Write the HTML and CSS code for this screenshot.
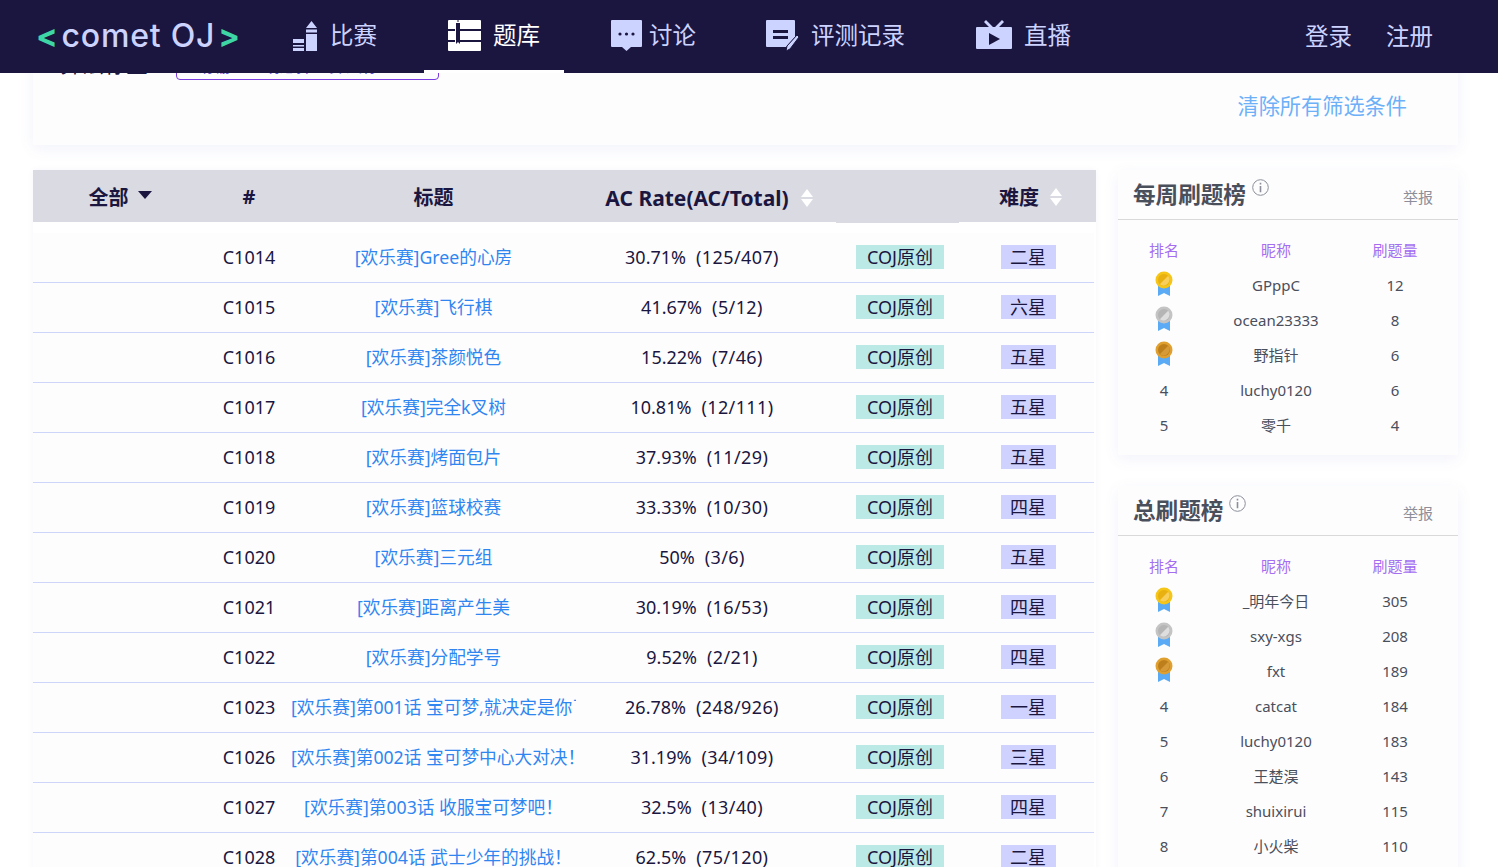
FILE: index.html
```html
<!DOCTYPE html>
<html lang="zh-CN">
<head>
    <meta charset="UTF-8">
    <meta name="viewport" content="width=device-width, initial-scale=1.0">
    <title>Comet OJ - 题库</title>
    <link rel="stylesheet" href="styles.css">
</head>
<body>
    <svg class="defs" width="0" height="0">
        <symbol id="medal" viewBox="0 0 20 26">
            <path d="M4 12h12v13l-6-3-6 3z" fill="#5aaaf5"/>
            <circle cx="10" cy="9" r="8.5" fill="var(--medal-edge)"/>
            <circle cx="10" cy="9" r="6" fill="var(--medal-dark)"/>
            <path d="M14.2 4.8a6 6 0 0 1-8.4 8.4z" fill="var(--medal-light)"/>
        </symbol>
    </svg>

    <header class="nav">
        <a class="logo"><span class="logo-mark">&lt;</span>comet OJ<span class="logo-mark">&gt;</span></a>
        <nav class="nav-links">
            <a class="nav-item">
                <svg width="26" height="31" viewBox="0 0 26 31" fill="#cdd3ff"><path d="M1 19h11v4H1zM1 25h11v1.500H1zM1 28h11v3H1z"/><path d="M14 8l5.500-7 5.500 7zM14 9.500h11v3H14zM14 14h11v17H14z"/></svg>
                <span>比赛</span>
            </a>
            <a class="nav-item active">
                <svg width="33" height="31" viewBox="0 0 33 31" fill="#fff"><rect width="33" height="31" rx="1"/><path d="M0 9h7v2H0zM0 20h7v2H0zM12 9h21v2H12zM12 20h21v2H12zM8 3h4v21l-2-2-2 2z" fill="#1b1640"/><path d="M9.500 0h1v2h-1z" fill="#1b1640"/></svg>
                <span>题库</span>
            </a>
            <a class="nav-item nav-talk">
                <svg width="31" height="31" viewBox="0 0 31 31"><path d="M1 0h29a1 1 0 0 1 1 1v25a1 1 0 0 1-1 1H20l-4.500 4-4.500-4H1a1 1 0 0 1-1-1V1a1 1 0 0 1 1-1z" fill="#cdd3ff"/><circle cx="9" cy="14" r="1.600" fill="#1b1640"/><circle cx="15.500" cy="14" r="1.600" fill="#1b1640"/><circle cx="22" cy="14" r="1.600" fill="#1b1640"/></svg>
                <span>讨论</span>
            </a>
            <a class="nav-item">
                <svg width="33" height="31" viewBox="0 0 33 31"><path d="M1 0h27a1 1 0 0 1 1 1v16l-9 10H1a1 1 0 0 1-1-1V1a1 1 0 0 1 1-1z" fill="#cdd3ff"/><path d="M7 10h15v3H7zM7 16h15v3H7z" fill="#1b1640"/><path d="M31 15l2 2-9 12-4 2 1-5z" fill="#cdd3ff" stroke="#1b1640" stroke-width="1"/></svg>
                <span>评测记录</span>
            </a>
            <a class="nav-item">
                <svg width="36" height="31" viewBox="0 0 36 31"><path d="M10 0l7 7h2l7-7 2 2-5 5h12a1 1 0 0 1 1 1v20a1 1 0 0 1-1 1H1a1 1 0 0 1-1-1V8a1 1 0 0 1 1-1h12L8 2z" fill="#cdd3ff"/><path d="M13 13l11 6-11 6z" fill="#1b1640"/></svg>
                <span>直播</span>
            </a>
        </nav>
        <div class="nav-auth">
            <a>登录</a>
            <a>注册</a>
        </div>
    </header>

    <main class="page">
        <section class="filter-card">
            <div class="filter-row">
                <span class="filter-label">算法标签</span>
                <div class="filter-input">请输入（或选择）算法标签</div>
            </div>
            <a class="clear-link">清除所有筛选条件</a>
        </section>

        <div class="columns">
            <section class="problems">
                <div class="row row-head">
                    <div class="cell">全部<i class="caret"></i></div>
                    <div class="cell">#</div>
                    <div class="cell">标题</div>
                    <div class="cell cell-rate">AC Rate(AC/Total)<i class="sorter"></i></div>
                    <div class="cell head-source"></div>
                    <div class="cell">难度<i class="sorter"></i></div>
                </div>
                <div class="row-gap"></div>

                <div class="row"><div></div><div>C1014</div><a class="title">[欢乐赛]Gree的心房</a><div class="rate">30.71%<span>(125/407)</span></div><div><span class="tag tag-source">COJ原创</span></div><div><span class="tag tag-level">二星</span></div></div>
                <div class="row"><div></div><div>C1015</div><a class="title">[欢乐赛]飞行棋</a><div class="rate">41.67%<span>(5/12)</span></div><div><span class="tag tag-source">COJ原创</span></div><div><span class="tag tag-level">六星</span></div></div>
                <div class="row"><div></div><div>C1016</div><a class="title">[欢乐赛]茶颜悦色</a><div class="rate">15.22%<span>(7/46)</span></div><div><span class="tag tag-source">COJ原创</span></div><div><span class="tag tag-level">五星</span></div></div>
                <div class="row"><div></div><div>C1017</div><a class="title">[欢乐赛]完全k叉树</a><div class="rate">10.81%<span>(12/111)</span></div><div><span class="tag tag-source">COJ原创</span></div><div><span class="tag tag-level">五星</span></div></div>
                <div class="row"><div></div><div>C1018</div><a class="title">[欢乐赛]烤面包片</a><div class="rate">37.93%<span>(11/29)</span></div><div><span class="tag tag-source">COJ原创</span></div><div><span class="tag tag-level">五星</span></div></div>
                <div class="row"><div></div><div>C1019</div><a class="title">[欢乐赛]篮球校赛</a><div class="rate">33.33%<span>(10/30)</span></div><div><span class="tag tag-source">COJ原创</span></div><div><span class="tag tag-level">四星</span></div></div>
                <div class="row"><div></div><div>C1020</div><a class="title">[欢乐赛]三元组</a><div class="rate">50%<span>(3/6)</span></div><div><span class="tag tag-source">COJ原创</span></div><div><span class="tag tag-level">五星</span></div></div>
                <div class="row"><div></div><div>C1021</div><a class="title">[欢乐赛]距离产生美</a><div class="rate">30.19%<span>(16/53)</span></div><div><span class="tag tag-source">COJ原创</span></div><div><span class="tag tag-level">四星</span></div></div>
                <div class="row"><div></div><div>C1022</div><a class="title">[欢乐赛]分配学号</a><div class="rate">9.52%<span>(2/21)</span></div><div><span class="tag tag-source">COJ原创</span></div><div><span class="tag tag-level">四星</span></div></div>
                <div class="row"><div></div><div>C1023</div><a class="title">[欢乐赛]第001话 宝可梦,就决定是你了！</a><div class="rate">26.78%<span>(248/926)</span></div><div><span class="tag tag-source">COJ原创</span></div><div><span class="tag tag-level">一星</span></div></div>
                <div class="row"><div></div><div>C1026</div><a class="title">[欢乐赛]第002话 宝可梦中心大对决！</a><div class="rate">31.19%<span>(34/109)</span></div><div><span class="tag tag-source">COJ原创</span></div><div><span class="tag tag-level">三星</span></div></div>
                <div class="row"><div></div><div>C1027</div><a class="title">[欢乐赛]第003话 收服宝可梦吧！</a><div class="rate">32.5%<span>(13/40)</span></div><div><span class="tag tag-source">COJ原创</span></div><div><span class="tag tag-level">四星</span></div></div>
                <div class="row"><div></div><div>C1028</div><a class="title">[欢乐赛]第004话 武士少年的挑战！</a><div class="rate">62.5%<span>(75/120)</span></div><div><span class="tag tag-source">COJ原创</span></div><div><span class="tag tag-level">二星</span></div></div>
            </section>

            <aside class="sidebar">
                <section class="rank-card">
                    <div class="rank-head">
                        <h2>每周刷题榜</h2>
                        <svg class="info" width="17" height="17" viewBox="0 0 17 17"><circle cx="8.500" cy="8.500" r="7.800" fill="none" stroke="#8c8f99"/><path d="M7.700 3.800h1.600v1.700H7.700zM7.700 7h1.600v6.200H7.700z" fill="#8c8f99"/></svg>
                        <a class="report">举报</a>
                    </div>
                    <div class="rank-list">
                        <div class="rank-row rank-title"><span>排名</span><span>昵称</span><span>刷题量</span></div>
                        <div class="rank-row"><span><svg class="medal gold" width="20" height="26"><use href="#medal"/></svg></span><span>GPppC</span><span>12</span></div>
                        <div class="rank-row"><span><svg class="medal silver" width="20" height="26"><use href="#medal"/></svg></span><span>ocean23333</span><span>8</span></div>
                        <div class="rank-row"><span><svg class="medal bronze" width="20" height="26"><use href="#medal"/></svg></span><span>野指针</span><span>6</span></div>
                        <div class="rank-row"><span>4</span><span>luchy0120</span><span>6</span></div>
                        <div class="rank-row"><span>5</span><span>零千</span><span>4</span></div>
                    </div>
                </section>

                <section class="rank-card">
                    <div class="rank-head">
                        <h2>总刷题榜</h2>
                        <svg class="info" width="17" height="17" viewBox="0 0 17 17"><circle cx="8.500" cy="8.500" r="7.800" fill="none" stroke="#8c8f99"/><path d="M7.700 3.800h1.600v1.700H7.700zM7.700 7h1.600v6.200H7.700z" fill="#8c8f99"/></svg>
                        <a class="report">举报</a>
                    </div>
                    <div class="rank-list">
                        <div class="rank-row rank-title"><span>排名</span><span>昵称</span><span>刷题量</span></div>
                        <div class="rank-row"><span><svg class="medal gold" width="20" height="26"><use href="#medal"/></svg></span><span>_明年今日</span><span>305</span></div>
                        <div class="rank-row"><span><svg class="medal silver" width="20" height="26"><use href="#medal"/></svg></span><span>sxy-xgs</span><span>208</span></div>
                        <div class="rank-row"><span><svg class="medal bronze" width="20" height="26"><use href="#medal"/></svg></span><span>fxt</span><span>189</span></div>
                        <div class="rank-row"><span>4</span><span>catcat</span><span>184</span></div>
                        <div class="rank-row"><span>5</span><span>luchy0120</span><span>183</span></div>
                        <div class="rank-row"><span>6</span><span>王楚淏</span><span>143</span></div>
                        <div class="rank-row"><span>7</span><span>shuixirui</span><span>115</span></div>
                        <div class="rank-row"><span>8</span><span>小火柴</span><span>110</span></div>
                    </div>
                </section>
            </aside>
        </div>
    </main>
</body>
</html>
```

FILE: styles.css
```css
:root {
    --navy: #1b1640;
    --lavender: #cdd3ff;
    --row-line: #cdd5fb;
    --card-bg: #fdfdfe;
    --link-blue: #2f86f0;
}

* {
    box-sizing: border-box;
    margin: 0;
    padding: 0;
}

html, body {
    height: 100%;
    overflow: hidden;
}

body {
    background-color: #fff;
    color: var(--navy);
    font-family: "Noto Sans", "Noto Sans CJK SC", sans-serif;
    font-size: 18px;
    font-weight: 400;
}

.defs {
    display: block;
    height: 0;
}

/* top bar */
.nav {
    position: fixed;
    top: 0;
    left: 0;
    right: 0;
    z-index: 10;
    height: 73px;
    background-color: var(--navy);
    display: flex;
    align-items: stretch;
    padding: 0 65px 0 36px;
}

.logo {
    width: 232px;
    display: flex;
    align-items: center;
    padding-bottom: 2px;
    font-family: "Inter", sans-serif;
    font-size: 32px;
    font-weight: 500;
    letter-spacing: 0.8px;
    white-space: pre;
    color: var(--lavender);
}

.logo-mark {
    color: #3fd6a6;
    font-size: 32px;
    font-weight: 700;
}

.logo-mark:first-child {
    margin-right: 3px;
}

.logo-mark:last-child {
    margin-left: 3px;
}

.nav-links {
    display: flex;
    gap: 23px;
}

.nav-item {
    display: flex;
    align-items: center;
    gap: 12px;
    padding: 0 24px 2px;
    font-size: 23.500px;
    color: var(--lavender);
    border-bottom: 3px solid transparent;
}

.nav-item svg {
    margin-top: 3px;
}

.nav-item.active {
    color: #fff;
    border-bottom-color: #fff;
}

.nav-talk {
    gap: 7px;
    margin-right: -1px;
}

.nav-auth {
    margin-left: auto;
    display: flex;
    align-items: center;
    gap: 34px;
    padding-bottom: 4px;
    font-size: 23.500px;
    color: var(--lavender);
}

/* page */
.page {
    padding-left: 33px;
}

.filter-card {
    width: 1425px;
    height: 145px;
    background-color: var(--card-bg);
    box-shadow: 0 4px 14px rgba(90, 100, 200, 0.08);
    padding: 40px 51px 0 27px;
}

.filter-row {
    display: flex;
    align-items: flex-start;
    height: 40px;
    gap: 26px;
}

.filter-label {
    width: 90px;
    padding-top: 10px;
    font-size: 22px;
    line-height: 26px;
    white-space: nowrap;
}

.filter-input {
    width: 263px;
    height: 40px;
    border: 1px solid #7a3be0;
    border-radius: 4px;
    padding: 13px 0 0 20px;
    font-size: 16.500px;
    line-height: 24px;
    color: #5a55d8;
}

.clear-link {
    display: block;
    text-align: right;
    margin-top: 9px;
    font-size: 21.200px;
    color: #6cb0f8;
}

.columns {
    display: flex;
    gap: 22px;
    margin-top: 25px;
}

/* problem table */
.problems {
    width: 1063px;
    box-shadow: 0 0 6px rgba(90, 100, 200, 0.06);
}

.row {
    display: grid;
    grid-template-columns: 174px 84px 285px 252px 144px 112px;
    height: 50px;
    width: 1061px;
    padding-bottom: 1px;
    align-items: center;
    text-align: center;
    background-color: var(--card-bg);
    border-bottom: 1px solid var(--row-line);
}

.row-head {
    width: 1063px;
    height: 52px;
    padding-bottom: 0;
    background-color: #d9dae2;
    border-bottom: none;
    align-items: stretch;
    font-size: 20px;
    font-weight: 700;
}

.row-gap {
    height: 11px;
    background-color: #fff;
}

.cell {
    display: flex;
    align-items: center;
    justify-content: center;
    padding-top: 1px;
}

.cell-rate {
    padding-top: 3px;
    font-size: 21px;
}

.head-source {
    margin: 0 13px -1px 8px;
    background-color: #d9dae2;
}

.caret {
    border-left: 7px solid transparent;
    border-right: 7px solid transparent;
    border-top: 8px solid var(--navy);
    margin: 0 0 3px 9px;
}

.sorter {
    width: 12px;
    height: 18px;
    margin: 0 -5px 0 11px;
    position: relative;
}

.cell-rate .sorter {
    margin: 0 -14px 0 12px;
}

.sorter::before,
.sorter::after {
    content: "";
    position: absolute;
    left: 0;
    border-left: 6px solid transparent;
    border-right: 6px solid transparent;
}

.sorter::before {
    top: 0;
    border-bottom: 8px solid #fff;
}

.sorter::after {
    bottom: 0;
    border-top: 8px solid #fff;
}

.title {
    padding-bottom: 2px;
    font-size: 17.700px;
    color: var(--link-blue);
    white-space: nowrap;
    overflow: hidden;
    text-align: center;
}

.rate span {
    margin-left: 10px;
    letter-spacing: 0.4px;
}

.tag {
    display: inline-block;
    height: 24px;
    line-height: 24px;
}

.tag-source {
    width: 88px;
    background-color: #bbeae6;
}

.tag-level {
    width: 55px;
    background-color: #cfd2ff;
}

/* leaderboards */
.sidebar {
    width: 340px;
    display: flex;
    flex-direction: column;
    gap: 31px;
}

.rank-card {
    background-color: var(--card-bg);
    box-shadow: 0 4px 14px rgba(90, 100, 200, 0.08);
    padding-bottom: 13px;
}

.rank-head {
    height: 50px;
    border-bottom: 1px solid #d9d9d9;
    padding: 0 25px 2px 15px;
    display: flex;
    align-items: center;
}

.rank-head h2 {
    font-size: 22.600px;
    font-weight: 700;
    color: #4a4f5c;
}

.info {
    margin: 0 0 12px 6px;
}

.report {
    margin: 6px 0 0 auto;
    font-size: 15px;
    color: #8c8f99;
}

.rank-list {
    padding-top: 12px;
}

.rank-row {
    display: grid;
    grid-template-columns: 92px 132px 106px;
    height: 35px;
    align-items: center;
    text-align: center;
    font-size: 15px;
    color: #4a4f5c;
}

.rank-row span {
    display: block;
}

.rank-title {
    color: #a56ef0;
}

.medal {
    display: block;
    margin: -2px auto 0;
}

.gold {
    --medal-edge: #f5c518;
    --medal-dark: #e8b010;
    --medal-light: #f7cf5a;
}

.silver {
    --medal-edge: #c4c4c4;
    --medal-dark: #b5b5b5;
    --medal-light: #dedede;
}

.bronze {
    --medal-edge: #e0a030;
    --medal-dark: #bd7e1c;
    --medal-light: #d69a38;
}
```
